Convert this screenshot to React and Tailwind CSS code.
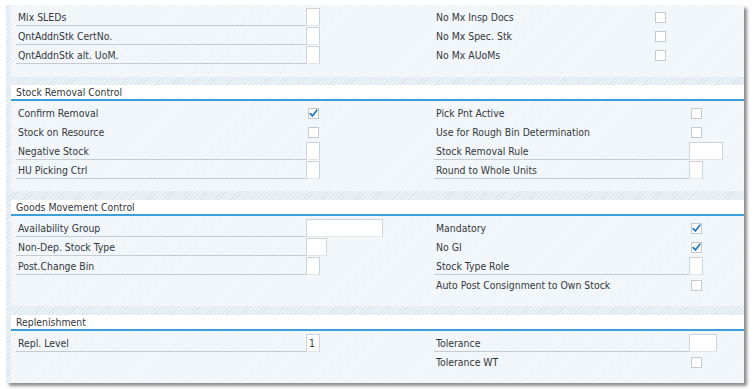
import React from 'react';

// SAP-style detail form: four sections, two columns of fields
const sections = [
  {
    title: null,
    pt: 'pt-[3px]',
    pb: 'pb-[12px]',
    rightLabel: 'w-[219px]',
    rows: [
      [{ label: 'Mix SLEDs', type: 'input', w: 'w-[14px]' }, { label: 'No Mx Insp Docs', type: 'check' }],
      [{ label: 'QntAddnStk CertNo.', type: 'input', w: 'w-[14px]' }, { label: 'No Mx Spec. Stk', type: 'check' }],
      [{ label: 'QntAddnStk alt. UoM.', type: 'input', w: 'w-[14px]' }, { label: 'No Mx AUoMs', type: 'check' }],
    ],
  },
  {
    title: 'Stock Removal Control',
    pt: 'pt-[3px]',
    pb: 'pb-[11px]',
    rightLabel: 'w-[255px]',
    rows: [
      [{ label: 'Confirm Removal', type: 'check', checked: true }, { label: 'Pick Pnt Active', type: 'check' }],
      [{ label: 'Stock on Resource', type: 'check' }, { label: 'Use for Rough Bin Determination', type: 'check' }],
      [{ label: 'Negative Stock', type: 'input', w: 'w-[14px]' }, { label: 'Stock Removal Rule', type: 'input', w: 'w-[34px]' }],
      [{ label: 'HU Picking Ctrl', type: 'input', w: 'w-[14px]' }, { label: 'Round to Whole Units', type: 'input', w: 'w-[14px]' }],
    ],
  },
  {
    title: 'Goods Movement Control',
    pt: 'pt-[3px]',
    pb: 'pb-[11px]',
    rightLabel: 'w-[255px]',
    rows: [
      [{ label: 'Availability Group', type: 'input', w: 'w-[77px]' }, { label: 'Mandatory', type: 'check', checked: true }],
      [{ label: 'Non-Dep. Stock Type', type: 'input', w: 'w-[21px]' }, { label: 'No GI', type: 'check', checked: true }],
      [{ label: 'Post.Change Bin', type: 'input', w: 'w-[14px]' }, { label: 'Stock Type Role', type: 'input', w: 'w-[14px]' }],
      [null, { label: 'Auto Post Consignment to Own Stock', type: 'check' }],
    ],
  },
  {
    title: 'Replenishment',
    pt: 'pt-[3px]',
    pb: 'pb-[11px]',
    rightLabel: 'w-[255px]',
    rows: [
      [{ label: 'Repl. Level', type: 'input', w: 'w-[14px]', value: '1' }, { label: 'Tolerance', type: 'input', w: 'w-[28px]' }],
      [null, { label: 'Tolerance WT', type: 'check' }],
    ],
  },
];

const Check = ({ checked }) => (
  <div className="mt-[4px] ml-[2px] w-[11px] h-[11px] border border-[#c4cacf] bg-white flex items-center justify-center">
    {checked && (
      <svg width="9" height="9" viewBox="0 0 9 9">
        <path d="M1.2 4.6 L3.4 7 L7.8 1.2" fill="none" stroke="#1e78c2" strokeWidth="1.7" strokeLinecap="round" strokeLinejoin="round" />
      </svg>
    )}
  </div>
);

const Field = ({ item, labelW }) => {
  if (!item) return null;
  const isInput = item.type === 'input';
  return (
    <div className="flex items-start">
      <div
        className={`${labelW} h-[18px] pl-[2px] leading-[19px] whitespace-nowrap ${
          isInput ? 'border-b border-[#c5cbd0]' : ''
        }`}
      >
        {item.label}
      </div>
      {isInput ? (
        <div className={`${item.w} h-[18px] bg-white border border-[#cdd3d8] border-b-[#e2e6e9] pl-[2px] leading-[16px]`}>
          {item.value}
        </div>
      ) : (
        <Check checked={item.checked} />
      )}
    </div>
  );
};

export default function App() {
  return (
    <div className="w-[754px] h-[389px] bg-white pt-[5px] pl-[6px] text-[10.4px] text-[#33373b] font-['DejaVu_Sans_Condensed','Liberation_Sans',sans-serif]">
      <div className="w-[738px] h-[378px] shadow-[3px_3px_3px_rgba(0,0,0,0.45)] bg-[repeating-linear-gradient(135deg,#eaf1f7_0px,#eaf1f7_2px,#dde6ee_2px,#dde6ee_3px)] pl-[5px] flex flex-col">
        {sections.map((s, i) => (
          <div key={i} className={i === 1 ? 'mt-[8px]' : i > 1 ? 'mt-[9px]' : ''}>
            {s.title && (
              <div className="h-[16px] bg-white border-b-2 border-[#3c9fda] pl-[5px] leading-[14px]">{s.title}</div>
            )}
            <div className={`bg-[repeating-linear-gradient(135deg,#f4f8fb_0px,#f4f8fb_2px,#edf3f8_2px,#edf3f8_3px)] pl-[5px] ${s.pt} ${s.pb}`}>
              {s.rows.map((r, j) => (
                <div key={j} className="h-[19px] flex">
                  <div className="w-[418px]">
                    <Field item={r[0]} labelW="w-[290px]" />
                  </div>
                  <div>
                    <Field item={r[1]} labelW={s.rightLabel} />
                  </div>
                </div>
              ))}
            </div>
          </div>
        ))}
      </div>
    </div>
  );
}
